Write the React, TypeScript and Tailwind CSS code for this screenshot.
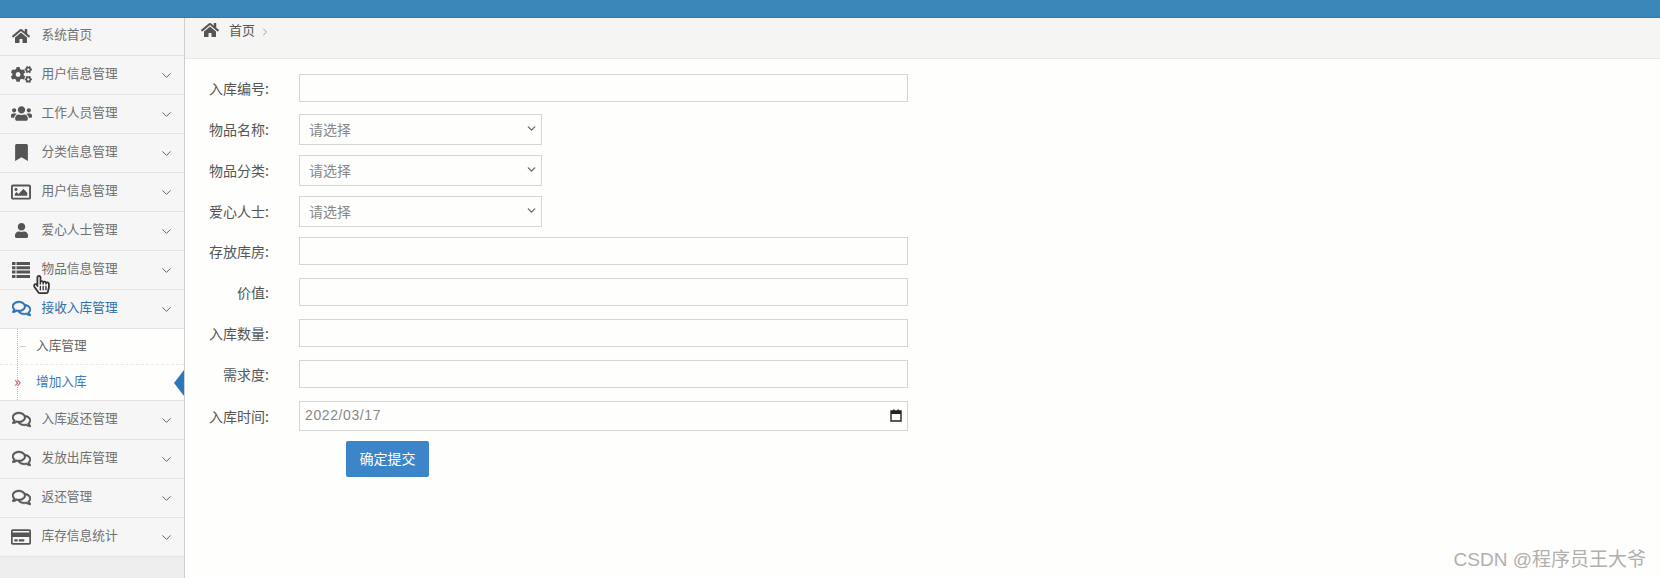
import React from "react";
import {
  FaHome, FaCogs, FaUsers, FaBookmark, FaRegImage, FaUser, FaRegComments, FaRegCreditCard, FaRegHandPointer,
} from "react-icons/fa";
import { ChevronDown, ChevronRight } from "lucide-react";

const font = { fontFamily: '"Noto Sans CJK SC", "Liberation Sans", sans-serif' };
const latin = { fontFamily: '"Liberation Sans", "Noto Sans CJK SC", sans-serif' };

function ListIcon() {
  return (
    <svg width="18" height="16" viewBox="0 0 18 16" fill="currentColor">
      <path d="M0 0h3.5v3H0zM4.5 0H18v3H4.5zM0 4.3h3.5v3H0zM4.5 4.3H18v3H4.5zM0 8.6h3.5v3H0zM4.5 8.6H18v3H4.5zM0 12.9h3.5v3H0zM4.5 12.9H18v3H4.5z" />
    </svg>
  );
}

function Item({ icon, label, active = false, h = "h-[39px]", chevron = true }: { icon: React.ReactNode; label: string; active?: boolean; h?: string; chevron?: boolean }) {
  return (
    <div className={`flex items-center ${h} border-b border-[#e4e4e4] bg-[#f6f6f6] ${active ? "text-[#2f6fa8]" : "text-[#707070]"}`}>
      <span className={`flex w-[41.5px] shrink-0 items-center justify-center pb-[1px] pl-[1px] ${active ? "text-[#2b72b5]" : "text-[#555555]"}`}>{icon}</span>
      <span className="flex-1 pb-[4px] text-[12.7px] leading-none">{label}</span>
      {chevron && <ChevronDown size={15} strokeWidth={1.6} className="mr-[10px] text-[#666666]" />}
    </div>
  );
}

function Text({ label, row }: { label: string; row: string }) {
  return (
    <div className={`flex ${row} items-start`}>
      <label className="flex h-[28px] w-[81px] items-center justify-end text-[14px] text-[#555555]">{label}:</label>
      <input readOnly className="ml-[30px] h-[28px] w-[609px] border border-[#d6d6d6] bg-[#fefefc] outline-none" />
    </div>
  );
}

function Select({ label, row }: { label: string; row: string }) {
  return (
    <div className={`flex ${row} items-start`}>
      <label className="flex h-[31px] w-[81px] items-center justify-end text-[14px] text-[#555555]">{label}:</label>
      <div className="relative ml-[30px] flex h-[31px] w-[243px] items-center border border-[#d6d6d6] bg-[#fefefc] pl-[9px] text-[14px] text-[#888888]">
        请选择
        <ChevronDown size={13} strokeWidth={2.4} className="absolute right-[3px] top-[7px] text-[#666666]" />
      </div>
    </div>
  );
}

const comments = <FaRegComments size={19} stroke="currentColor" strokeWidth={14} />;

export default function App() {
  return (
    <div style={font} className="flex h-[578px] w-[1660px] flex-col overflow-hidden bg-[#fefefc]">
      <div className="h-[18px] shrink-0 border-b border-[#2f7aa9] bg-[#3a87b8]" />
      <div className="flex flex-1">
        <aside className="relative flex w-[185px] shrink-0 flex-col border-r border-[#cfcfcf] bg-[#eeeeee]">
          <Item icon={<FaHome size={18} />} label="系统首页" h="h-[38px]" chevron={false} />
          <Item icon={<FaCogs size={21} />} label="用户信息管理" />
          <Item icon={<FaUsers size={21} />} label="工作人员管理" />
          <Item icon={<FaBookmark size={17} />} label="分类信息管理" />
          <Item icon={<FaRegImage size={20} />} label="用户信息管理" />
          <Item icon={<FaUser size={15} />} label="爱心人士管理" />
          <Item icon={<ListIcon />} label="物品信息管理" />
          <Item icon={comments} label="接收入库管理" active />
          <div className="relative flex h-[72px] flex-col border-b border-[#e4e4e4] bg-[#fefefc] text-[12.7px]">
            <span className="absolute bottom-0 left-[17px] top-0 border-l border-dotted border-[#bbbbbb]" />
            <div className="flex h-[36px] items-center border-b border-dashed border-[#e8e8e8] pb-[3px] pl-[36px] text-[#666666]">
              <span className="absolute left-[20px] top-[17px] h-px w-[6px] bg-[#cccccc]" />
              入库管理
            </div>
            <div className="flex flex-1 items-center pb-[4px] pl-[36px] text-[#3a7cb8]">
              <span className="absolute left-[14px] top-[44px] text-[15px] leading-none text-[#c0504d]">»</span>
              增加入库
              <span className="absolute right-0 top-[41px] h-0 w-0 border-y-[13px] border-r-[10px] border-y-transparent border-r-[#2b78b8]" />
            </div>
          </div>
          <Item icon={comments} label="入库返还管理" />
          <Item icon={comments} label="发放出库管理" />
          <Item icon={comments} label="返还管理" />
          <Item icon={<FaRegCreditCard size={20} />} label="库存信息统计" />
          <FaRegHandPointer size={19} className="absolute left-[32px] top-[257px] fill-[#333333]" />
        </aside>
        <main className="relative flex-1">
          <div className="flex h-[41px] items-start border-b border-[#e9e9e9] bg-[#f5f5f4] pl-[16px] pt-[3px] text-[13px] text-[#555555]">
            <FaHome size={18} className="text-[#555555]" />
            <span className="ml-[10px] leading-[18px]">首页</span>
            <ChevronRight size={12} strokeWidth={1.5} className="ml-[4px] mt-[5px] text-[#888888]" />
          </div>
          <form className="flex flex-col pl-[3px] pt-[15px]">
            <Text label="入库编号" row="h-[40px]" />
            <Select label="物品名称" row="h-[41px]" />
            <Select label="物品分类" row="h-[41px]" />
            <Select label="爱心人士" row="h-[41px]" />
            <Text label="存放库房" row="h-[41px]" />
            <Text label="价值" row="h-[41px]" />
            <Text label="入库数量" row="h-[41px]" />
            <Text label="需求度" row="h-[41px]" />
            <div className="flex h-[40px] items-start">
              <label className="flex h-[30px] w-[81px] items-center justify-end text-[14px] text-[#555555]">入库时间:</label>
              <div style={latin} className="relative ml-[30px] flex h-[30px] w-[609px] items-center border border-[#d6d6d6] bg-[#fefefc] pb-[2px] pl-[5px] text-[14px] tracking-[0.6px] text-[#888888]">
                2022/03/17
                <svg width="12" height="13" viewBox="0 0 12 13" className="absolute right-[5px] top-[7px]">
                  <path d="M1 2h10v10H1z" fill="none" stroke="#222222" strokeWidth="1.4" />
                  <path d="M1 2h10v3H1z M3 0.5h1.5V2H3z M7.5 0.5H9V2H7.5z" fill="#222222" />
                </svg>
              </div>
            </div>
            <button type="button" className="ml-[158px] h-[36px] w-[83px] rounded-[2px] bg-[#3c85c9] pb-[2px] text-[14px] text-white">确定提交</button>
          </form>
          <span style={latin} className="absolute bottom-[6px] right-[14px] text-[19px] leading-[24px] text-[#b0b0b0]">CSDN @程序员王大爷</span>
        </main>
      </div>
    </div>
  );
}
